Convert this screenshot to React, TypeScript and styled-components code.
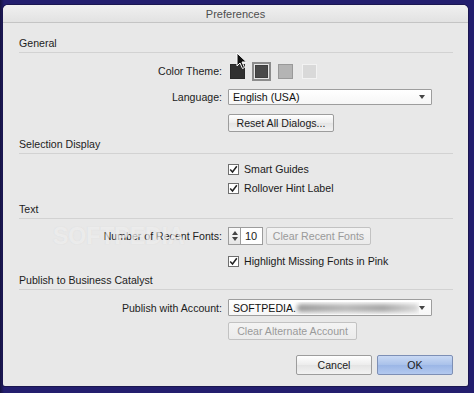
import styled, { createGlobalStyle, css } from "styled-components";

const GlobalStyle = createGlobalStyle`
  html, body {
    margin: 0;
    padding: 0;
    background: #221d69;
  }
  body {
    font-family: "Liberation Sans", Arial, sans-serif;
    font-size: 10.6px;
    color: #1a1a1a;
  }
`;

const Screen = styled.div`
  width: 474px;
  height: 393px;
  box-sizing: border-box;
  padding: 5px 6px 7px 3px;
  background: linear-gradient(90deg, #15123f 0px, #231e6e 4px, #231e6e 100%);
  position: relative;
  overflow: hidden;
`;

const Dialog = styled.div`
  height: 100%;
  background: #e8e8e8;
  border-radius: 5px 5px 2px 2px;
  display: flex;
  flex-direction: column;
  box-shadow: 0 0 0 1px #1a1650;
`;

const TitleBar = styled.div`
  height: 17px;
  line-height: 18px;
  text-align: center;
  color: #4e4e4e;
  font-size: 11px;
  border-radius: 5px 5px 0 0;
  background: linear-gradient(#f0f0f0, #e2e2e2);
  border-bottom: 1px solid #c4c4c4;
`;

const Body = styled.div`
  padding: 0 15px 0 16px;
  display: flex;
  flex-direction: column;
`;

const SectionTitle = styled.div<{ $mt: number }>`
  margin-top: ${p => p.$mt}px;
  line-height: 13px;
  padding-bottom: 2px;
  border-bottom: 1px solid #d2d2d2;
  color: #1c1c1c;
`;

const Row = styled.div<{ $mt: number; $h: number }>`
  margin-top: ${p => p.$mt}px;
  height: ${p => p.$h}px;
  display: grid;
  grid-template-columns: 203px 1fr;
  column-gap: 6px;
  align-items: center;
`;

const Label = styled.div`
  text-align: right;
  color: #222;
`;

const Controls = styled.div`
  display: flex;
  align-items: center;
  gap: 3px;
  height: 100%;
`;

const Swatches = styled.div`
  display: flex;
  gap: 5px;
  align-items: center;
`;

const Swatch = styled.div<{ $color: string; $selected?: boolean; $light?: boolean }>`
  width: 19px;
  height: 19px;
  box-sizing: border-box;
  display: flex;
  align-items: center;
  justify-content: center;
  ${p => p.$selected && css`
    border: 2px solid #8c8c8c;
    box-shadow: inset 0 0 0 1px #e6e6e6;
  `}
  &::after {
    content: "";
    width: ${p => (p.$selected ? 13 : 15)}px;
    height: ${p => (p.$selected ? 13 : 15)}px;
    background: ${p => p.$color};
    box-sizing: border-box;
    border: 1px solid ${p => (p.$light ? "#f2f2f2" : "rgba(0,0,0,0.15)")};
  }
`;

const Select = styled.div<{ $h: number }>`
  width: 204px;
  height: ${p => p.$h}px;
  box-sizing: border-box;
  background: linear-gradient(#ffffff, #f6f6f6);
  border: 1px solid #9d9d9d;
  border-radius: 1px;
  display: flex;
  align-items: center;
  padding: 0 6px 0 4px;
  color: #111;
`;

const SelectText = styled.span`
  flex: 1;
  display: flex;
  align-items: center;
  overflow: hidden;
  white-space: nowrap;
`;

const Blurred = styled.span`
  display: inline-block;
  width: 138px;
  height: 8px;
  margin-left: 1px;
  background: linear-gradient(90deg, #9a9a9a, #b8b8b8 40%, #a5a5a5 70%, #d8d8d8);
  filter: blur(2px);
  border-radius: 4px;
`;

const Arrow = styled.span`
  width: 0;
  height: 0;
  border-left: 3px solid transparent;
  border-right: 3px solid transparent;
  border-top: 4px solid #444;
`;

const Button = styled.div<{ $w: number; $h?: number; $disabled?: boolean; $primary?: boolean }>`
  width: ${p => p.$w}px;
  height: ${p => p.$h ?? 18}px;
  box-sizing: border-box;
  display: flex;
  align-items: center;
  justify-content: center;
  border-radius: 2px;
  border: 1px solid ${p => (p.$disabled ? "#c2c2c2" : p.$primary ? "#7d8fb5" : "#9c9c9c")};
  background: ${p =>
    p.$primary
      ? "linear-gradient(#c9d9f4, #a9c1ea 50%, #9bb6e6 51%, #b3c9ef)"
      : p.$disabled
      ? "linear-gradient(#f3f3f3, #ebebeb)"
      : "linear-gradient(#ffffff, #ececec 50%, #e4e4e4 51%, #f2f2f2)"};
  color: ${p => (p.$disabled ? "#9a9a9a" : "#1a1a1a")};
  white-space: nowrap;
`;

const Stepper = styled.div`
  display: flex;
  height: 18px;
`;

const StepArrows = styled.div`
  width: 13px;
  box-sizing: border-box;
  border: 1px solid #9c9c9c;
  background: linear-gradient(#fafafa, #e6e6e6);
  display: flex;
  flex-direction: column;
  align-items: center;
  justify-content: center;
  gap: 2px;
  &::before, &::after {
    content: "";
    width: 0;
    height: 0;
    border-left: 3px solid transparent;
    border-right: 3px solid transparent;
  }
  &::before { border-bottom: 4px solid #444; }
  &::after { border-top: 4px solid #444; }
`;

const StepField = styled.div`
  width: 22px;
  box-sizing: border-box;
  border: 1px solid #9c9c9c;
  border-left: none;
  background: #fff;
  display: flex;
  align-items: center;
  padding-left: 4px;
  font-size: 11px;
`;

const CheckBox = styled.span`
  width: 11px;
  height: 11px;
  box-sizing: border-box;
  border: 1px solid #6f6f6f;
  background: #fff;
  display: inline-flex;
  align-items: center;
  justify-content: center;
  margin-right: 2px;
`;

const Footer = styled.div`
  margin-top: 15px;
  display: flex;
  justify-content: flex-end;
  gap: 5px;
`;

const Watermark = styled.div`
  position: absolute;
  left: 53px;
  top: 223px;
  font-size: 23px;
  font-weight: bold;
  color: rgba(255, 255, 255, 0.5);
  text-shadow: 0 0 1px rgba(200, 200, 200, 0.5);
  pointer-events: none;
`;

const Cursor = styled.svg`
  position: absolute;
  left: 236px;
  top: 52px;
`;

const Check = () => (
  <CheckBox>
    <svg width="9" height="9" viewBox="0 0 9 9">
      <path d="M1.2 4.6 L3.5 7 L7.8 1.2" fill="none" stroke="#222" strokeWidth="1.5" />
    </svg>
  </CheckBox>
);

export default function App() {
  return (
    <>
      <GlobalStyle />
      <Screen>
        <Dialog>
          <TitleBar>Preferences</TitleBar>
          <Body>
            <SectionTitle $mt={14}>General</SectionTitle>
            <Row $mt={8} $h={20}>
              <Label>Color Theme:</Label>
              <Controls>
                <Swatches>
                  <Swatch $color="#313131" />
                  <Swatch $color="#4a4a4a" $selected />
                  <Swatch $color="#b4b4b4" />
                  <Swatch $color="#d9d9d9" $light />
                </Swatches>
              </Controls>
            </Row>
            <Row $mt={8} $h={16}>
              <Label>Language:</Label>
              <Controls>
                <Select $h={16}>
                  <SelectText>English (USA)</SelectText>
                  <Arrow />
                </Select>
              </Controls>
            </Row>
            <Row $mt={9} $h={18}>
              <div />
              <Controls>
                <Button $w={106}>Reset All Dialogs...</Button>
              </Controls>
            </Row>

            <SectionTitle $mt={6}>Selection Display</SectionTitle>
            <Row $mt={8} $h={14}>
              <div />
              <Controls>
                <Check />
                Smart Guides
              </Controls>
            </Row>
            <Row $mt={5} $h={14}>
              <div />
              <Controls>
                <Check />
                Rollover Hint Label
              </Controls>
            </Row>

            <SectionTitle $mt={8}>Text</SectionTitle>
            <Row $mt={8} $h={18}>
              <Label>Number of Recent Fonts:</Label>
              <Controls>
                <Stepper>
                  <StepArrows />
                  <StepField>10</StepField>
                </Stepper>
                <Button $w={105} $disabled>Clear Recent Fonts</Button>
              </Controls>
            </Row>
            <Row $mt={9} $h={14}>
              <div />
              <Controls>
                <Check />
                Highlight Missing Fonts in Pink
              </Controls>
            </Row>

            <SectionTitle $mt={6}>Publish to Business Catalyst</SectionTitle>
            <Row $mt={9} $h={17}>
              <Label>Publish with Account:</Label>
              <Controls>
                <Select $h={17}>
                  <SelectText>
                    SOFTPEDIA.
                    <Blurred />
                  </SelectText>
                  <Arrow />
                </Select>
              </Controls>
            </Row>
            <Row $mt={6} $h={18}>
              <div />
              <Controls>
                <Button $w={129} $disabled>Clear Alternate Account</Button>
              </Controls>
            </Row>

            <Footer>
              <Button $w={76} $h={20}>Cancel</Button>
              <Button $w={76} $h={20} $primary>OK</Button>
            </Footer>
          </Body>
        </Dialog>
        <Watermark>SOFTPEDIA</Watermark>
        <Cursor width="12" height="18" viewBox="0 0 12 18">
          <path d="M1 1 L1 14 L4 11 L6.5 16.5 L8.5 15.5 L6 10 L10.5 10 Z" fill="#111" stroke="#fff" strokeWidth="1" />
        </Cursor>
      </Screen>
    </>
  );
}
